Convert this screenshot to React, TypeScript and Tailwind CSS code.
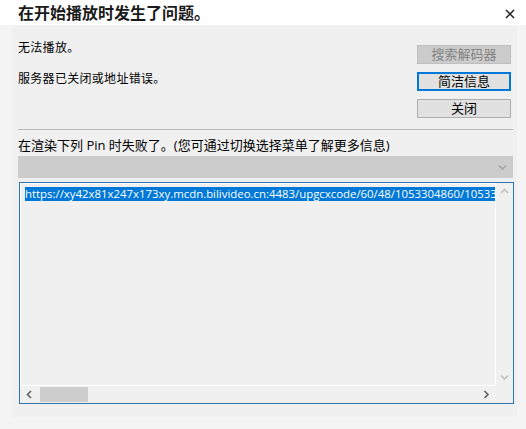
const url =
  "https://xy42x81x247x173xy.mcdn.bilivideo.cn:4483/upgcxcode/60/48/1053304860/10533";

const font = "font-['Segoe_UI','Open_Sans','Noto_Sans_CJK_SC',sans-serif]";

function Button({
  label,
  kind,
}: {
  label: string;
  kind: "disabled" | "default" | "normal";
}) {
  const styles = {
    disabled: "bg-[#cccccc] border border-[#bfbfbf] text-[#838383]",
    default: "bg-[#e1e1e1] border-2 border-[#0078d7] text-black",
    normal: "bg-[#e1e1e1] border border-[#adadad] text-black",
  }[kind];
  return (
    <div
      className={`w-[94px] h-[19px] flex items-center justify-center text-[13px] leading-none ${styles}`}
    >
      {label}
    </div>
  );
}

function Chevron({ dir, color }: { dir: "up" | "down" | "left" | "right"; color: string }) {
  const d = {
    up: "M1 5 L4.5 1.5 L8 5",
    down: "M1 1.5 L4.5 5 L8 1.5",
    left: "M5 1 L1.5 4.5 L5 8",
    right: "M1.5 1 L5 4.5 L1.5 8",
  }[dir];
  const vert = dir === "up" || dir === "down";
  return (
    <svg
      width={vert ? 9 : 7}
      height={vert ? 7 : 9}
      viewBox={vert ? "0 0 9 7" : "0 0 7 9"}
      fill="none"
    >
      <path d={d} stroke={color} strokeWidth="1.6" />
    </svg>
  );
}

export default function App() {
  return (
    <div className={`w-[526px] h-[429px] bg-[#f4f4f4] overflow-hidden ${font}`}>
      {/* title band */}
      <div className="h-[25px] bg-white flex items-center justify-between pl-[18px] pr-[11px]">
        <span className="text-[16px] font-bold text-[#1a1a1a] leading-none mt-[1px]">
          在开始播放时发生了问题。
        </span>
        <svg width="10" height="10" viewBox="0 0 10 10" className="mt-[3px]">
          <path d="M1 1 L9 9 M9 1 L1 9" stroke="#222" strokeWidth="1.5" />
        </svg>
      </div>

      {/* body */}
      <div className="ml-[12px] w-[505px] h-[392px] bg-[#f0f0f0] pl-[6px] text-[12px] text-black">
        <div className="flex justify-between w-[496px]">
          <div className="pt-[15px] leading-[16px] tracking-[0.3px]">
            <div>无法播放。</div>
            <div className="mt-[15px]">服务器已关闭或地址错误。</div>
          </div>
          <div className="pt-[20px] mr-[3px] flex flex-col gap-[8px]">
            <Button label="搜索解码器" kind="disabled" />
            <Button label="简洁信息" kind="default" />
            <Button label="关闭" kind="normal" />
          </div>
        </div>

        <div className="mt-[11px] h-px w-[495px] bg-[#b9b9b9]" />

        <div className="mt-[7px] leading-[16px] text-[13px]">
          在渲染下列 Pin 时失败了。(您可通过切换选择菜单了解更多信息)
        </div>

        <div className="mt-[3px] w-[495px] h-[22px] bg-[#cccccc] flex items-center justify-end pr-[6px]">
          <Chevron dir="down" color="#a6a6a6" />
        </div>

        {/* text box */}
        <div className="mt-[4px] ml-[1px] w-[495px] h-[222px] border border-[#2a77b4] flex flex-col">
          <div className="flex flex-1 min-h-0">
            <div className="flex-1 min-w-0 border border-white pt-[1px] pl-[4px] overflow-hidden">
              <span className="whitespace-nowrap bg-[#0078d7] text-white text-[11.4px] leading-[14px] inline-block">
                {url}
              </span>
            </div>
            <div className="w-[17px] flex flex-col items-center justify-between py-[5px]">
              <Chevron dir="up" color="#bfbfbf" />
              <Chevron dir="down" color="#bfbfbf" />
            </div>
          </div>
          <div className="h-[17px] flex">
            <div className="flex-1 flex items-center pl-[6px] pr-[6px]">
              <Chevron dir="left" color="#606060" />
              <div className="ml-[7px] w-[48px] h-[15px] bg-[#cdcdcd]" />
              <div className="flex-1" />
              <Chevron dir="right" color="#606060" />
            </div>
            <div className="w-[17px]" />
          </div>
        </div>
      </div>
    </div>
  );
}
